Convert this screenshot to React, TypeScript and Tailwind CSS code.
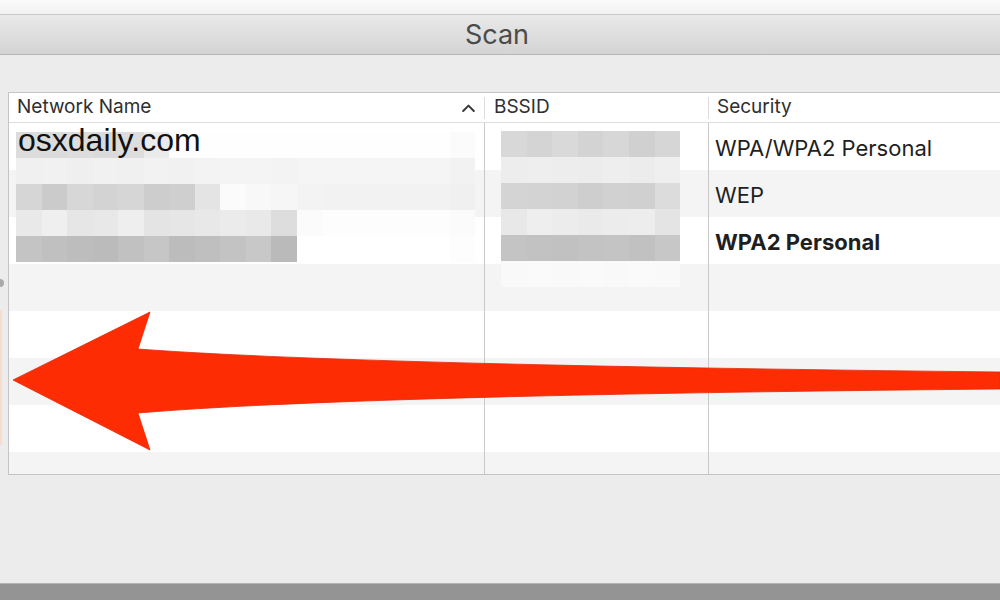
const netBlocks = [
  ['#dcdcdc', '#dbdbdb', '#dddddd', '#dadada', '#dddddd', '#ebebeb', '#fdfdfd', '#fefefe', '#fefefe', '#fefefe', '#fefefe', '#fefefe', '#fefefe', '#fefefe', '#fefefe', '#fefefe', '#fefefe', '#fbfbfb'],
  ['#f0f0f0', '#f1f1f1', '#efefef', '#f1f1f1', '#f0f0f0', '#f2f2f2', '#f1f1f1', '#f3f3f3', '#f4f4f4', '#f4f4f4', '#f3f3f3', '#f5f5f5', '#f5f5f5', '#f5f5f5', '#f5f5f5', '#f5f5f5', '#f5f5f5', '#f2f2f2'],
  ['#d6d6d6', '#cbcbcb', '#d7d7d7', '#d3d3d3', '#d6d6d6', '#cdcdcd', '#cfcfcf', '#e4e4e4', '#fbfbfb', '#f8f8f8', '#f6f6f6', '#f3f3f3', '#f2f2f2', '#f2f2f2', '#f2f2f2', '#f2f2f2', '#f2f2f2', '#f0f0f0'],
  ['#e9e9e9', '#efefef', '#e6e6e6', '#e8e8e8', '#eeeeee', '#e4e4e4', '#e6e6e6', '#e8e8e8', '#ebebeb', '#e9e9e9', '#dddddd', '#fbfbfb', '#fdfdfd', '#fdfdfd', '#fdfdfd', '#fdfdfd', '#fdfdfd', '#fbfbfb'],
  ['#c4c4c4', '#c0c0c0', '#bdbdbd', '#bbbbbb', '#c1c1c1', '#c6c6c6', '#bcbcbc', '#bfbfbf', '#c3c3c3', '#c8c8c8', '#bababa', '#ffffff', '#ffffff', '#ffffff', '#ffffff', '#ffffff', '#ffffff', '#fdfdfd'],
];

const bssidBlocks = [
  ['#d8d8d8', '#d4d4d4', '#d9d9d9', '#d3d3d3', '#d7d7d7', '#d0d0d0', '#d6d6d6'],
  ['#ededed', '#eeeeee', '#ededed', '#ececec', '#eeeeee', '#ececec', '#efefef'],
  ['#d4d4d4', '#d3d3d3', '#d2d2d2', '#cecece', '#d1d1d1', '#d0d0d0', '#dcdcdc'],
  ['#e8e8e8', '#eeeeee', '#ececec', '#eaeaea', '#ececec', '#ededed', '#e4e4e4'],
  ['#c4c4c4', '#c2c2c2', '#c1c1c1', '#c3c3c3', '#c4c4c4', '#c1c1c1', '#c7c7c7'],
  ['#f9f9f9', '#fafafa', '#f9f9f9', '#fafafa', '#f9f9f9', '#fafafa', '#f9f9f9'],
];

const security = [
  { text: 'WPA/WPA2 Personal', bold: false },
  { text: 'WEP', bold: false },
  { text: 'WPA2 Personal', bold: true },
  null,
  null,
  null,
  null,
  null,
];

function Mosaic({ rows, cols }: { rows: string[][]; cols: string }) {
  return (
    <div className={`grid ${cols} auto-rows-[26px]`}>
      {rows.flatMap((row, r) =>
        row.map((c, i) => <div key={`${r}-${i}`} style={{ backgroundColor: c }} />)
      )}
    </div>
  );
}

export default function App() {
  return (
    <div className="relative w-[1000px] h-[600px] overflow-hidden bg-[#ececec] flex flex-col font-[Inter,sans-serif]">
      {/* top strip + title bar */}
      <div className="h-[15px] shrink-0 bg-gradient-to-b from-[#fbfbfb] to-[#f1f1f1] border-b border-[#c9c9c9]" />
      <div className="h-[40px] shrink-0 bg-gradient-to-b from-[#e9e9e9] to-[#d4d4d4] border-b border-[#b7b7b7] flex items-center justify-center">
        <span className="text-[27px] text-[#4b4b4b] leading-none -ml-[6px]">Scan</span>
      </div>

      <div className="pt-[37px] pl-[8px]">
        <div className="relative w-[1010px] h-[383px] overflow-hidden bg-white border-l border-t border-b border-[#c4c4c4]">
          {/* header */}
          <div className="flex h-[30px] border-b border-[#dedede] text-[19px] text-[#2e2e2e]">
            <div className="w-[475px] flex items-center justify-between pl-[8px] pr-[9px]">
              <span>Network Name</span>
              <svg width="13" height="8" viewBox="0 0 13 8" fill="none">
                <polyline points="1.2,7 6.5,1.6 11.8,7" stroke="#3a3a3a" strokeWidth="2" strokeLinecap="round" strokeLinejoin="round" />
              </svg>
            </div>
            <div className="w-[224px] flex items-center">
              <div className="w-px h-[22px] bg-[#dcdcdc]" />
              <span className="pl-[9px]">BSSID</span>
            </div>
            <div className="flex-1 flex items-center">
              <div className="w-px h-[22px] bg-[#dcdcdc]" />
              <span className="pl-[8px]">Security</span>
            </div>
          </div>

          {/* rows */}
          {security.map((s, i) => (
            <div key={i} className={`flex h-[47px] ${i % 2 === 1 ? 'bg-[#f4f4f4]' : 'bg-white'}`}>
              <div className="w-[475px] pl-[9px]">
                {i === 0 && (
                  <span className="relative z-10 block pt-[1px] text-[32px] leading-[32px] text-[#111] font-['Liberation_Sans',sans-serif]">
                    osxdaily.com
                  </span>
                )}
              </div>
              <div className="w-[224px] border-l border-[#c9c9c9]" />
              <div className="flex-1 border-l border-[#c9c9c9] flex items-center pl-[6px] pt-[3px]">
                {s && (
                  <span className={`relative z-10 text-[22px] text-[#1f1f1f] ${s.bold ? 'font-bold' : ''}`}>{s.text}</span>
                )}
              </div>
            </div>
          ))}

          {/* redaction mosaics */}
          <div className="absolute left-[7px] top-[39px]">
            <Mosaic rows={netBlocks} cols="grid-cols-[repeat(18,25.5px)]" />
          </div>
          <div className="absolute left-[492px] top-[38px]">
            <Mosaic rows={bssidBlocks} cols="grid-cols-[repeat(7,25.6px)]" />
          </div>
        </div>
      </div>

      <div className="flex-1" />
      <div className="h-[17px] shrink-0 bg-[#949494] border-t border-[#b3b3b3]" />

      {/* window edge bits on the left */}
      <div className="absolute left-[-4px] top-[279px] w-[8px] h-[8px] rounded-full bg-[#a9a9a9]" />
      <div className="absolute left-0 top-[310px] w-[2px] h-[135px] bg-[#f5dccd]" />

      {/* red annotation arrow */}
      <svg className="absolute inset-0 pointer-events-none" width="1000" height="600" viewBox="0 0 1000 600">
        <path
          d="M13,380 L150,312 L138,349 Q350,365 1000,372 L1000,389 Q350,395 138,413 L150,450 Z"
          fill="#fe2c03"
          stroke="#e02a0a"
          strokeWidth="0.8"
          strokeLinejoin="miter"
        />
      </svg>
    </div>
  );
}
